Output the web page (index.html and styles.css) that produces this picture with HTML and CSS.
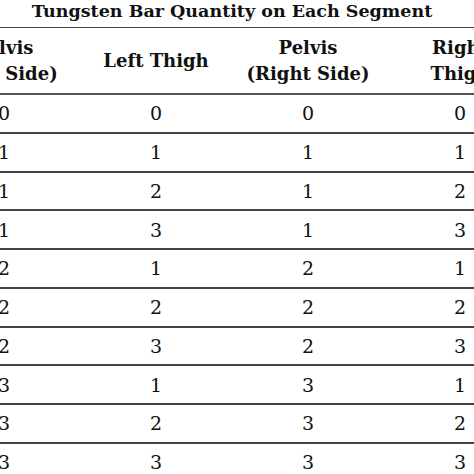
FILE: index.html
```html
<!DOCTYPE html>
<html>
<head>
<meta charset="utf-8">
<link rel="stylesheet" href="styles.css">
</head>
<body>
<div class="frame">
<table class="seg">
  <thead>
    <tr class="title-row"><th colspan="4" class="title">Tungsten Bar Quantity on Each Segment</th></tr>
    <tr class="head-row">
      <th>Pelvis<br>(Left Side)</th>
      <th>Left Thigh</th>
      <th>Pelvis<br>(Right Side)</th>
      <th>Right<br>Thigh</th>
    </tr>
  </thead>
  <tbody>
    <tr><td>0</td><td>0</td><td>0</td><td>0</td></tr>
    <tr><td>1</td><td>1</td><td>1</td><td>1</td></tr>
    <tr><td>1</td><td>2</td><td>1</td><td>2</td></tr>
    <tr><td>1</td><td>3</td><td>1</td><td>3</td></tr>
    <tr><td>2</td><td>1</td><td>2</td><td>1</td></tr>
    <tr><td>2</td><td>2</td><td>2</td><td>2</td></tr>
    <tr><td>2</td><td>3</td><td>2</td><td>3</td></tr>
    <tr><td>3</td><td>1</td><td>3</td><td>1</td></tr>
    <tr><td>3</td><td>2</td><td>3</td><td>2</td></tr>
    <tr><td>3</td><td>3</td><td>3</td><td>3</td></tr>
  </tbody>
</table>
</div>
</body>
</html>
```
FILE: styles.css
```css
html, body {
  margin: 0;
  padding: 0;
  background: #ffffff;
}
body {
  width: 474px;
  height: 474px;
  overflow: hidden;
}
.frame {
  width: 474px;
  height: 474px;
  overflow: hidden;
}
.seg {
  margin-left: -72px;
  border-collapse: collapse;
  table-layout: fixed;
  width: 608px;
  font-family: "DejaVu Serif", serif;
  color: #111;
}
.seg th, .seg td {
  width: 152px;
  text-align: center;
  padding: 0;
}
.title-row th {
  font-size: 17.5px;
  font-weight: bold;
  height: 27px;
  line-height: 22px;
  vertical-align: top;
  border-bottom: 1.5px solid #444;
}
.head-row th {
  font-size: 18px;
  font-weight: bold;
  line-height: 26px;
  height: 65px;
  border-bottom: 2.5px solid #555;
}
.seg td {
  font-size: 19px;
  height: 36.75px;
  line-height: 24px;
  border-bottom: 2px solid #444;
}
```
